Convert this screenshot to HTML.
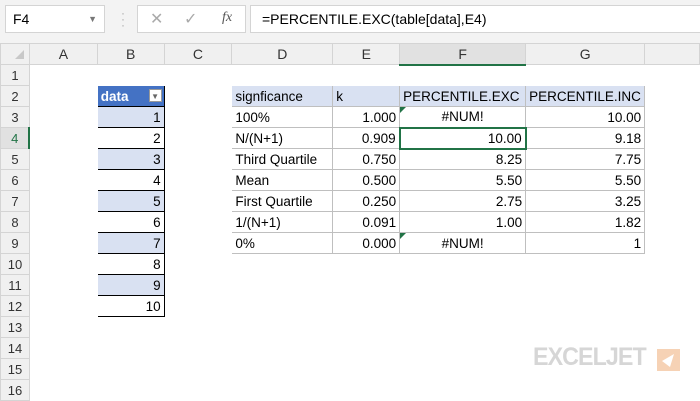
<!DOCTYPE html>
<html><head><style>
body{margin:0;width:700px;height:400px;overflow:hidden;background:#fff;font-family:"Liberation Sans",sans-serif;position:relative}
.top{position:absolute;left:0;top:0;width:700px;height:43px;background:#f3f3f3}
.nb{position:absolute;left:5px;top:5px;width:100px;height:28px;background:#fff;border:1px solid #d4d4d4;box-sizing:border-box;font-size:14px;line-height:26px;padding-left:7px}
.fx{position:absolute;left:137px;top:5px;width:109px;height:28px;background:#fff;border:1px solid #d4d4d4;box-sizing:border-box}
.fb{position:absolute;left:250px;top:5px;width:460px;height:28px;background:#fff;border:1px solid #d4d4d4;box-sizing:border-box;font-size:14px;line-height:26px;padding-left:11px}
table{position:absolute;left:0;top:43px;border-collapse:collapse;table-layout:fixed;font-size:13.5px}
td{height:20px;padding:0 3px;border:1px solid transparent;white-space:nowrap;overflow:hidden;box-sizing:border-box;vertical-align:middle}
.h{background:#f0f0f0;color:#333;text-align:center;border-color:#d4d4d4;font-size:14px}
.rh{background:#f0f0f0;text-align:center;border-color:#d4d4d4;font-size:13px;color:#333}
.b{border:1px solid #000;text-align:right}
.bs{background:#d9e1f2}
.g{border:1px solid #bfbfbf}
.r{text-align:right}.c{text-align:center}
.dh{background:#d9e1f2}
</style></head><body>
<div class="top"></div>
<div class="nb">F4<span style="position:absolute;right:7px;top:0;font-size:9px;color:#777">▼</span></div>
<div style="position:absolute;left:121px;top:10px;color:#aaa;font-size:12px;line-height:6px">·<br>·<br>·</div>
<div class="fx"><span style="position:absolute;left:12px;top:3px;color:#aaa;font-size:16px">✕</span><span style="position:absolute;left:46px;top:3px;color:#aaa;font-size:16px">✓</span><span style="position:absolute;left:84px;top:4px;color:#555;font-size:14px;font-style:italic;font-family:'Liberation Serif',serif">fx</span></div>
<div class="fb">=PERCENTILE.EXC(table[data],E4)</div>
<table>
<colgroup><col style="width:29px"><col style="width:68px"><col style="width:67px"><col style="width:68px"><col style="width:101px"><col style="width:67px"><col style="width:126px"><col style="width:119px"><col style="width:55px"></colgroup>
<tr style="height:21px"><td class="h" style="background:#f0f0f0"><span style="display:inline-block;width:0;height:0;border-left:9px solid transparent;border-bottom:9px solid #c8c8c8;margin-left:10px"></span></td><td class="h">A</td><td class="h">B</td><td class="h">C</td><td class="h">D</td><td class="h">E</td><td class="h" style="background:#e1e1e1;border-bottom:2px solid #217346">F</td><td class="h">G</td><td class="h"></td></tr>
<tr style="height:21px"><td class="rh">1</td><td></td><td></td><td></td><td></td><td></td><td></td><td></td><td></td></tr>
<tr style="height:21px"><td class="rh">2</td><td></td><td class="b" style="background:#4472c4;color:#fff;font-weight:bold;text-align:left;position:relative">data<span style="position:absolute;right:2px;top:3px;background:#fff;color:#666;font-size:8px;width:13px;height:13px;line-height:13px;text-align:center;border:1px solid #999;box-sizing:border-box">▼</span></td><td></td><td class="g dh">signficance</td><td class="g dh">k</td><td class="g dh">PERCENTILE.EXC</td><td class="g dh">PERCENTILE.INC</td><td></td></tr>
<tr style="height:21px"><td class="rh">3</td><td></td><td class="b bs">1</td><td></td><td class="g">100%</td><td class="g r">1.000</td><td class="g c" style="position:relative"><span style="position:absolute;left:0;top:0;border-top:6px solid #217346;border-right:6px solid transparent"></span>#NUM!</td><td class="g r">10.00</td><td></td></tr>
<tr style="height:21px"><td class="rh" style="background:#e1e1e1;color:#217346;border-right:2px solid #217346">4</td><td></td><td class="b">2</td><td></td><td class="g">N/(N+1)</td><td class="g r">0.909</td><td class="r" style="border:2px solid #217346">10.00</td><td class="g r">9.18</td><td></td></tr>
<tr style="height:21px"><td class="rh">5</td><td></td><td class="b bs">3</td><td></td><td class="g">Third Quartile</td><td class="g r">0.750</td><td class="g r">8.25</td><td class="g r">7.75</td><td></td></tr>
<tr style="height:21px"><td class="rh">6</td><td></td><td class="b">4</td><td></td><td class="g">Mean</td><td class="g r">0.500</td><td class="g r">5.50</td><td class="g r">5.50</td><td></td></tr>
<tr style="height:21px"><td class="rh">7</td><td></td><td class="b bs">5</td><td></td><td class="g">First Quartile</td><td class="g r">0.250</td><td class="g r">2.75</td><td class="g r">3.25</td><td></td></tr>
<tr style="height:21px"><td class="rh">8</td><td></td><td class="b">6</td><td></td><td class="g">1/(N+1)</td><td class="g r">0.091</td><td class="g r">1.00</td><td class="g r">1.82</td><td></td></tr>
<tr style="height:21px"><td class="rh">9</td><td></td><td class="b bs">7</td><td></td><td class="g">0%</td><td class="g r">0.000</td><td class="g c" style="position:relative"><span style="position:absolute;left:0;top:0;border-top:6px solid #217346;border-right:6px solid transparent"></span>#NUM!</td><td class="g r">1</td><td></td></tr>
<tr style="height:21px"><td class="rh">10</td><td></td><td class="b">8</td><td></td><td></td><td></td><td></td><td></td><td></td></tr>
<tr style="height:21px"><td class="rh">11</td><td></td><td class="b bs">9</td><td></td><td></td><td></td><td></td><td></td><td></td></tr>
<tr style="height:21px"><td class="rh">12</td><td></td><td class="b">10</td><td></td><td></td><td></td><td></td><td></td><td></td></tr>
<tr style="height:21px"><td class="rh">13</td><td></td><td></td><td></td><td></td><td></td><td></td><td></td><td></td></tr>
<tr style="height:21px"><td class="rh">14</td><td></td><td></td><td></td><td></td><td></td><td></td><td></td><td></td></tr>
<tr style="height:21px"><td class="rh">15</td><td></td><td></td><td></td><td></td><td></td><td></td><td></td><td></td></tr>
<tr style="height:21px"><td class="rh">16</td><td></td><td></td><td></td><td></td><td></td><td></td><td></td><td></td></tr>
</table>
<div style="position:absolute;left:533px;top:345px;font-size:25px;line-height:25px;font-weight:bold;color:#d6d6d6;letter-spacing:-1px;transform:scaleX(0.93);transform-origin:left top">EXCELJET</div>
<div style="position:absolute;left:657px;top:349px;width:23px;height:22px;background:#f6d2b5"><svg width="23" height="22"><polygon points="5,12 17,5 13,18" fill="#fff"/></svg></div>
</body></html>
